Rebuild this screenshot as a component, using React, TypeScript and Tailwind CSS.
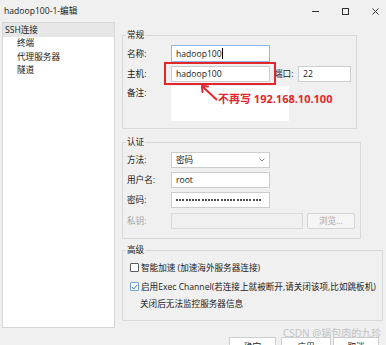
import React from "react";

const font = { fontFamily: `"Open Sans", "Noto Sans CJK SC", sans-serif` };

const Field: React.FC<{ className?: string; children?: React.ReactNode }> = ({
  className,
  children,
}) => (
  <div
    className={`flex h-[16px] items-center border border-[#cdcdcd] bg-white px-[4px] text-[#1a1a1a] ${className ?? ""}`}
  >
    {children}
  </div>
);

const Label: React.FC<{ children: React.ReactNode; muted?: boolean }> = ({
  children,
  muted,
}) => (
  <span className={`w-[44px] shrink-0 ${muted ? "text-[#a6a6a6]" : "text-[#1a1a1a]"}`}>
    {children}
  </span>
);

const dots = Array.from({ length: 27 });

export default function App() {
  return (
    <div
      className="relative flex h-[345px] w-[386px] flex-col overflow-hidden bg-[#f0f0f0] text-[8.6px] leading-[12px] text-[#1a1a1a]"
      style={font}
    >
      {/* title bar */}
      <div className="flex h-[22px] shrink-0 items-center pl-[4px]">
        <span>hadoop100-1-编辑</span>
        <div className="ml-auto flex items-center">
          <div className="h-px w-[7px] bg-[#333]" />
          <div className="ml-[23px] h-[7px] w-[7px] border border-[#333]" />
          <svg className="ml-[23px] mr-[7px]" width="7" height="7" viewBox="0 0 7 7">
            <path d="M0.5 0.5 L6.5 6.5 M6.5 0.5 L0.5 6.5" stroke="#333" strokeWidth="1" />
          </svg>
        </div>
      </div>

      <div className="flex shrink-0 items-start">
        {/* tree */}
        <div className="ml-[2px] h-[306px] w-[113px] border border-[#d6d6d6] bg-white">
          <div className="bg-[#e6e6e6] py-[1px] pl-[2px] leading-[12px]">SSH连接</div>
          <div className="flex flex-col pl-[14px] leading-[13.5px]">
            <span>终端</span>
            <span>代理服务器</span>
            <span>隧道</span>
          </div>
        </div>

        {/* right side */}
        <div className="ml-[7px] flex flex-col">
          {/* 常规 */}
          <div className="relative mt-[13px] h-[94px] w-[235px] border border-[#d9d9d9] pl-[4px] pt-[9px]">
            <span className="absolute -top-[7px] left-[3px] bg-[#f0f0f0] px-px">常规</span>
            <div className="flex h-[17px] items-center">
              <Label>名称:</Label>
              <div className="flex h-[17px] w-[99px] items-center border border-[#8fb9e6] bg-white px-[4px]">
                <span>hadoop100</span>
                <span className="h-[11px] w-px bg-black" />
              </div>
            </div>
            <div className="mt-[4px] flex items-center">
              <Label>主机:</Label>
              <Field className="w-[99px]">hadoop100</Field>
              <span className="ml-[4px] w-[24px]">端口:</span>
              <Field className="w-[53px]">22</Field>
            </div>
            <div className="mt-[4px] flex items-start">
              <span className="w-[44px] pt-[1px]">备注:</span>
              <div className="h-[35px] w-[118px] bg-white" />
            </div>
          </div>

          {/* 认证 */}
          <div className="relative mt-[13px] h-[97px] w-[239px] border border-[#d9d9d9] pl-[4px] pt-[9px]">
            <span className="absolute -top-[7px] left-[3px] bg-[#f0f0f0] px-px">认证</span>
            <div className="flex items-center">
              <Label>方法:</Label>
              <Field className="w-[99px] justify-between">
                <span>密码</span>
                <svg width="6" height="4" viewBox="0 0 6 4">
                  <path d="M0.5 0.5 L3 3 L5.5 0.5" fill="none" stroke="#777" strokeWidth="0.9" />
                </svg>
              </Field>
            </div>
            <div className="mt-[4px] flex items-center">
              <Label>用户名:</Label>
              <Field className="w-[99px]">root</Field>
            </div>
            <div className="mt-[4px] flex items-center">
              <Label>密码:</Label>
              <Field className="w-[99px] gap-[1.2px]">
                {dots.map((_, i) => (
                  <span key={i} className="h-[2px] w-[2px] shrink-0 rounded-full bg-[#111]" />
                ))}
              </Field>
            </div>
            <div className="mt-[5px] flex items-center">
              <Label muted>私钥:</Label>
              <div className="h-[16px] w-[132px] border border-[#dadada] bg-[#f0f0f0]" />
              <div className="ml-[4px] flex h-[16px] w-[48px] items-center justify-center rounded-[2px] border border-[#d4d4d4] bg-[#f5f5f5] text-[#a6a6a6]">
                浏览...
              </div>
            </div>
          </div>

          {/* 高级 */}
          <div className="relative mt-[11px] h-[71px] w-[261px] border border-[#d9d9d9] pl-[7px] pt-[10px]">
            <span className="absolute -top-[7px] left-[3px] bg-[#f0f0f0] px-px">高级</span>
            <div className="flex h-[13px] items-center">
              <span className="h-[9px] w-[9px] rounded-[1px] border border-[#5c5c5c] bg-white" />
              <span className="ml-[2px]">智能加速 (加速海外服务器连接)</span>
            </div>
            <div className="mt-[6px] flex h-[13px] items-center whitespace-nowrap">
              <span className="flex h-[9px] w-[9px] items-center justify-center rounded-[1px] border border-[#6e9fdc] bg-white">
                <svg width="7" height="6" viewBox="0 0 7 6">
                  <path d="M0.8 3 L2.7 5 L6.3 0.8" fill="none" stroke="#2f73cf" strokeWidth="1" />
                </svg>
              </span>
              <span className="ml-[2px]">启用Exec Channel(若连接上就被断开,请关闭该项,比如跳板机)</span>
            </div>
            <div className="mt-[5px] h-[13px] pl-[10px] leading-[13px]">关闭后无法监控服务器信息</div>
          </div>
        </div>
      </div>

      {/* buttons */}
      <div className="mt-[9px] flex shrink-0">
        <div className="ml-[229px] flex h-[22px] w-[47px] justify-center border border-[#cfcfcf] bg-white pt-[3px]">确定</div>
        <div className="ml-[5px] flex h-[22px] w-[50px] justify-center border border-[#cfcfcf] bg-white pt-[3px]">应用</div>
        <div className="ml-[2px] flex h-[22px] w-[46px] justify-center border border-[#cfcfcf] bg-white pt-[3px]">取消</div>
      </div>

      {/* annotation overlay */}
      <div className="absolute left-[164px] top-[62px] h-[23px] w-[112px] border-2 border-[#e3262b]" />
      <svg className="absolute left-[198px] top-[82px]" width="22" height="20" viewBox="0 0 22 20">
        <path d="M19 18 L5 5" stroke="#e3262b" strokeWidth="2" fill="none" />
        <path d="M4 4 L4.5 10 M4 4 L10 4.5" stroke="#e3262b" strokeWidth="2" fill="none" strokeLinecap="round" />
      </svg>
      <span className="absolute left-[218px] top-[92px] text-[11px] font-bold leading-[14px] text-[#e3262b]">
        不再写 192.168.10.100
      </span>

      {/* watermark */}
      <span className="absolute left-[283px] top-[326px] whitespace-nowrap text-[10px] leading-[14px] text-[#c2c2c2]">
        CSDN @锅包肉的九珍
      </span>
    </div>
  );
}
